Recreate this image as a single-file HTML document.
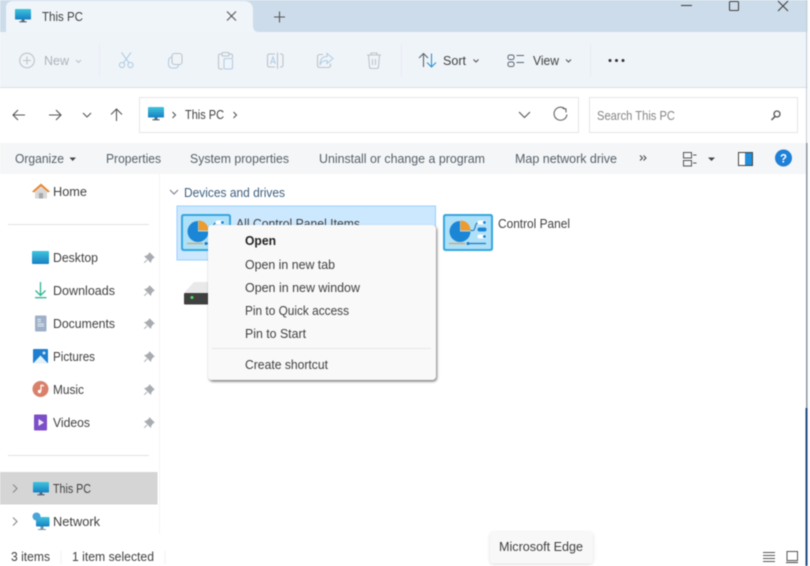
<!DOCTYPE html>
<html><head><meta charset="utf-8"><title>This PC</title>
<style>
html,body{margin:0;padding:0;background:#fff;width:810px;height:566px;overflow:hidden}
svg{display:block;filter:blur(.45px)}
text{font-family:"Liberation Sans",sans-serif;font-size:13px;fill:#404040}
.d{fill:#adb3b9}
.i{fill:none;stroke:#bcc3ca;stroke-width:1.1}
.b{fill:none;stroke:#b3cde2;stroke-width:1.1}
.k{fill:none;stroke:#555;stroke-width:1.1}
</style></head><body>
<svg width="810" height="566" viewBox="0 0 810 566" xmlns="http://www.w3.org/2000/svg">
<defs>
<filter id="sh" x="-10%" y="-10%" width="120%" height="125%"><feDropShadow dx="1" dy="1.5" stdDeviation="1.3" flood-color="#000" flood-opacity=".55"/></filter>
<filter id="sh2" x="-10%" y="-20%" width="120%" height="140%"><feDropShadow dx="0" dy="1" stdDeviation="1.5" flood-color="#000" flood-opacity=".14"/></filter>
<linearGradient id="mon" x1="0" y1="0" x2="0" y2="1"><stop offset="0" stop-color="#3fc5dc"/><stop offset="1" stop-color="#1680c4"/></linearGradient>
<symbol id="pc" viewBox="0 0 16 14"><rect x="0" y="0" width="16" height="10.5" rx=".8" fill="url(#mon)"/><rect x="6.6" y="10.5" width="2.8" height="2" fill="#4a6a80"/><rect x="4.4" y="12.2" width="7.2" height="1.1" fill="#4a5a68"/></symbol>
<symbol id="pin" viewBox="0 0 12 12"><path d="M6.6 1 L11 5.4 L9.8 5.9 L7.9 8.6 L7.6 10 L2 4.4 L3.4 4.1 L6.1 2.2Z M4 8 L1.2 10.8" fill="#a8acb0" stroke="#a8acb0" stroke-width="1"/></symbol>
<symbol id="cp" viewBox="0 0 50 37"><rect width="50" height="37" rx="2.500" fill="#35a6e0"/><rect x="2" y="2" width="46" height="33" rx="1" fill="#aee0f7"/><path d="M17 7 A10.500 10.500 0 1 0 27.500 17.500 L17 17.500Z" fill="#1c86d6"/><path d="M17.500 6.500 A10 10 0 0 1 27.500 16.500 L17.500 16.500Z" fill="#ee9a2e"/><path d="M27.500 16.500 H30 C33 16.500 31 8.500 36 8.500" fill="none" stroke="#1f6fb8" stroke-width="1"/><rect x="34.500" y="6.500" width="9" height="4" rx="2" fill="#fff"/><circle cx="41.500" cy="8.500" r="1.500" fill="#1c86d6"/><rect x="34.500" y="13.500" width="9" height="4" rx="2" fill="#1c86d6"/><rect x="34.500" y="20.500" width="9" height="4" rx="2" fill="#fff"/><circle cx="41.500" cy="22.500" r="1.500" fill="#1c86d6"/><path d="M6 29.500H22" stroke="#d8a256" stroke-width="1.200"/><path d="M26 29.500H43" stroke="#1c78c4" stroke-width="1.200"/><circle cx="25" cy="29.500" r="1.500" fill="#1c78c4"/></symbol>
</defs>

<!-- window chrome -->
<rect width="810" height="32" fill="#cddcea"/>
<rect y="32" width="810" height="55" fill="#eff4f9"/>
<rect y="87" width="810" height="1" fill="#d8dfe5"/>
<rect y="143" width="810" height="31" fill="#f5f6f7"/>
<path d="M0 32 H6 V8 Q6 1 14 1 H243 Q253 1 253 10 V26 Q253 32 259 32 H0Z" fill="#f0f5fa"/>
<rect x="159" y="174" width="1" height="360" fill="#f6f6f6"/>

<!-- right edge -->
<rect x="806" y="0" width="1" height="143" fill="#c2ccd6"/>
<rect x="806" y="143" width="1.500" height="265" fill="#8e96a0"/>
<rect x="805.500" y="408" width="2.500" height="158" fill="#1d4a80"/>
<rect x="807.500" y="0" width="2.500" height="566" fill="#fbfbfb"/>

<!-- tab -->
<use href="#pc" x="15" y="9" width="16" height="14"/>
<text x="42" y="21" textLength="41" lengthAdjust="spacingAndGlyphs" fill="#333">This PC</text>
<path d="M227 11.500 L236 20.500 M236 11.500 L227 20.500" class="k"/>
<path d="M279.500 11.500 V22.500 M274 17 H285" class="k" stroke="#666"/>

<!-- caption buttons -->
<path d="M681 5.500 H692" stroke="#444" stroke-width="1.100"/>
<rect x="729.500" y="1.500" width="9" height="9" rx="1" fill="none" stroke="#444" stroke-width="1.100"/>
<path d="M778 1 L788 11 M788 1 L778 11" stroke="#444" stroke-width="1.100" fill="none"/>

<!-- toolbar -->
<circle cx="27" cy="60.500" r="7.300" class="i"/>
<path d="M27 56.500 V64.500 M23 60.500 H31" class="i"/>
<text class="d" x="44" y="65" textLength="25" lengthAdjust="spacingAndGlyphs">New</text>
<path d="M76 60 L78.500 62.500 L81 60" class="i"/>
<rect x="99" y="44" width="1" height="33" fill="#e8edf2"/>
<!-- cut -->
<circle cx="122" cy="65" r="2.600" class="b"/><circle cx="130.500" cy="65" r="2.600" class="b"/>
<path d="M123.500 62.800 L131 52.500 M129 62.800 L121.500 52.500" class="b" stroke="#b8bfc6"/>
<!-- copy -->
<rect x="172" y="53.500" width="10" height="11" rx="2.500" class="i"/>
<path d="M172 57 Q168.500 57.500 168.500 61 V64 Q168.500 68 172.500 68 H175 Q178 68 178.500 65" class="b"/>
<!-- paste -->
<path d="M222 54 H220 Q218.500 54 218.500 56 V67 Q218.500 69 220.500 69 H223" class="i"/>
<path d="M229 54 H231 Q232.500 54 232.500 56 V58" class="i"/>
<rect x="222" y="52.500" width="7" height="3.500" rx="1" class="i"/>
<rect x="224" y="58.500" width="8.500" height="10.500" rx="1.500" class="b"/>
<!-- rename -->
<path d="M275 54 H269.500 Q267.500 54 267.500 56 V65 Q267.500 67 269.500 67 H275" class="i"/>
<path d="M280 54 H281 Q283 54 283 56 V65 Q283 67 281 67 H280" class="i"/>
<path d="M277.500 52.500 V69" class="i"/>
<path d="M270.500 64 L273 57 L275.500 64 M271.500 62 H274.500" class="b"/>
<!-- share -->
<path d="M327 53.500 L333 58.500 L327 63.500 V60.500 Q321.500 60.500 320 65 Q320 56.500 327 56.500Z" class="b"/>
<path d="M323 54.500 H320 Q317.500 54.500 317.500 57 V65 Q317.500 67.500 320 67.500 H328 Q330.500 67.500 330.500 65 V63.500" class="i"/>
<!-- delete -->
<path d="M367 55 H381 M371 55 V53 H377 V55 M368.500 55 L369.500 67 Q369.700 68.500 371.500 68.500 H376.500 Q378.300 68.500 378.500 67 L379.500 55 M372.500 59 V65 M375.500 59 V65" class="i"/>
<rect x="401" y="44" width="1" height="33" fill="#e8edf2"/>
<!-- sort -->
<path d="M423.500 67 V53.500 M419 58 L423.500 53.500 L428 58" fill="none" stroke="#5a6570" stroke-width="1.100"/>
<path d="M431.500 53.500 V67 M427 62.500 L431.500 67 L436 62.500" fill="none" stroke="#2f8fd0" stroke-width="1.100"/>
<text x="443" y="65" textLength="23" lengthAdjust="spacingAndGlyphs">Sort</text>
<path d="M473.500 59.500 L476 62 L478.500 59.500" class="k" stroke="#888"/>
<!-- view -->
<rect x="508" y="55" width="6" height="4.500" rx="1.800" fill="none" stroke="#5a6570" stroke-width="1"/>
<rect x="508" y="62" width="6" height="4.500" rx="1.800" fill="none" stroke="#5a6570" stroke-width="1"/>
<path d="M516.500 55.500 H524 M516.500 62.500 H524" stroke="#5a6570" stroke-width="1"/>
<text x="533" y="65" textLength="26" lengthAdjust="spacingAndGlyphs">View</text>
<path d="M566 59.500 L568.500 62 L571 59.500" class="k" stroke="#888"/>
<rect x="590" y="44" width="1" height="33" fill="#e8edf2"/>
<circle cx="610" cy="60.500" r="1.500" fill="#333"/><circle cx="616.500" cy="60.500" r="1.500" fill="#333"/><circle cx="623" cy="60.500" r="1.500" fill="#333"/>

<!-- nav -->
<path d="M13 115 H25 M18 110 L13 115 L18 120" class="k"/>
<path d="M49 115 H61 M56 110 L61 115 L56 120" class="k"/>
<path d="M83 113 L87 117 L91 113" class="k"/>
<path d="M116.500 121 V109 M111 114.500 L116.500 109 L122 114.500" class="k"/>
<rect x="139.500" y="97.500" width="439" height="35" fill="#fff" stroke="#e4e6e8"/>
<use href="#pc" x="148" y="107" width="16" height="14"/>
<path d="M172.500 112 L175.500 115 L172.500 118" class="k"/>
<text x="185" y="119" textLength="39" lengthAdjust="spacingAndGlyphs">This PC</text>
<path d="M233.500 112 L236.500 115 L233.500 118" class="k"/>
<path d="M519 112 L524.500 117.500 L530 112" class="k"/>
<path d="M565.500 109.500 A6.500 6.500 0 1 0 567 114.500 M562.500 108.500 L566 109 L566 112.500" fill="none" stroke="#666" stroke-width="1.100"/>
<rect x="589.500" y="97.500" width="208" height="35" fill="#fff" stroke="#e4e6e8"/>
<text x="597" y="120" textLength="78" lengthAdjust="spacingAndGlyphs" style="fill:#858585">Search This PC</text>
<circle cx="777" cy="114" r="3" fill="none" stroke="#555" stroke-width="1.300"/>
<path d="M775 116.500 L771.500 120" stroke="#555" stroke-width="1.500"/>

<!-- command bar -->
<text x="15" y="163" textLength="49" lengthAdjust="spacingAndGlyphs" style="fill:#55606a">Organize</text>
<path d="M69.500 157.500 H76 L72.700 161Z" fill="#444"/>
<text x="106" y="163" textLength="55" lengthAdjust="spacingAndGlyphs" style="fill:#55606a">Properties</text>
<text x="190" y="163" textLength="99" lengthAdjust="spacingAndGlyphs" style="fill:#55606a">System properties</text>
<text x="319" y="163" textLength="166" lengthAdjust="spacingAndGlyphs" style="fill:#55606a">Uninstall or change a program</text>
<text x="515" y="163" textLength="102" lengthAdjust="spacingAndGlyphs" style="fill:#55606a">Map network drive</text>
<path d="M640 155.500 L642.500 158 L640 160.500 M643.500 155.500 L646 158 L643.500 160.500" fill="none" stroke="#444" stroke-width="1"/>
<rect x="683.500" y="152.500" width="8" height="5.500" fill="none" stroke="#555"/>
<rect x="683.500" y="160.500" width="8" height="5.500" fill="none" stroke="#555"/>
<path d="M693 155 H696.500 M693 163 H696.500" stroke="#555"/>
<path d="M708 157.500 H715 L711.500 161Z" fill="#444"/>
<rect x="738.500" y="152.500" width="14" height="13" fill="#fff" stroke="#444"/>
<rect x="745" y="153" width="7" height="12" fill="#1f8fdc"/>
<circle cx="783.500" cy="158" r="8.500" fill="#1f80d8"/>
<text x="780" y="162.500" textLength="7" lengthAdjust="spacingAndGlyphs" style="fill:#fff;font-weight:bold;font-size:11.500px">?</text>

<!-- sidebar -->
<path d="M32 191.500 L41 183.500 L50 191.500 L48 192.500 L41 186.500 L34 192.500Z" fill="#e58b3a"/>
<path d="M35 192 L41 187 L47 192 V198.500 H35Z" fill="#d8d8d8"/>
<rect x="39" y="193" width="4" height="5.500" fill="#a8a8a8"/>
<text x="53" y="196" textLength="34" lengthAdjust="spacingAndGlyphs">Home</text>
<rect x="8" y="224" width="141" height="1" fill="#e2e2e2"/>
<rect x="32" y="251" width="17" height="13" rx="1" fill="url(#mon)"/>
<text x="53" y="262" textLength="45" lengthAdjust="spacingAndGlyphs">Desktop</text>
<use href="#pin" x="143" y="252" width="12" height="12"/>
<path d="M40.500 282 V295 M35.500 290.500 L40.500 295.500 L45.500 290.500" fill="none" stroke="#2fb392" stroke-width="1.300"/>
<rect x="35" y="297" width="11.500" height="1.300" fill="#2fb392"/>
<text x="53" y="295" textLength="62" lengthAdjust="spacingAndGlyphs">Downloads</text>
<use href="#pin" x="143" y="285" width="12" height="12"/>
<rect x="35" y="315.500" width="11.500" height="16" rx="1" fill="#9fb1c8"/>
<path d="M37.500 319.500 H41 M37.500 321.500 H41 M37.500 324 H44 M37.500 326 H44" stroke="#e8edf3" stroke-width="1"/>
<text x="53" y="328" textLength="62" lengthAdjust="spacingAndGlyphs">Documents</text>
<use href="#pin" x="143" y="318" width="12" height="12"/>
<rect x="33" y="349" width="15" height="14.500" rx="1" fill="#1e7fd0"/>
<path d="M33 363.500 L40.500 355.500 L48 363.500Z" fill="#e6f2fb"/>
<circle cx="44" cy="353" r="1.500" fill="#cfe6f7"/>
<text x="53" y="361" textLength="42" lengthAdjust="spacingAndGlyphs">Pictures</text>
<use href="#pin" x="143" y="351" width="12" height="12"/>
<circle cx="40.500" cy="389" r="8" fill="#d9806a"/>
<path d="M41 385 V391 M41 385 L44 386" stroke="#fff" stroke-width="1.200" fill="none"/>
<circle cx="39.500" cy="391.500" r="1.700" fill="#fff"/>
<text x="53" y="394" textLength="31" lengthAdjust="spacingAndGlyphs">Music</text>
<use href="#pin" x="143" y="384" width="12" height="12"/>
<rect x="34" y="414.500" width="13" height="16" rx="1" fill="#7c4fc8"/>
<path d="M38.500 419 L44 422.500 L38.500 426Z" fill="#f0e8fb"/>
<text x="53" y="427" textLength="37" lengthAdjust="spacingAndGlyphs">Videos</text>
<use href="#pin" x="143" y="417" width="12" height="12"/>
<rect x="8" y="455" width="141" height="1" fill="#e2e2e2"/>
<rect x="0" y="472" width="157.500" height="32.500" fill="#d5d5d5"/>
<path d="M13 484.500 L17 488.500 L13 492.500" fill="none" stroke="#888" stroke-width="1.100"/>
<use href="#pc" x="33" y="482" width="16" height="14"/>
<text x="53" y="493" textLength="38" lengthAdjust="spacingAndGlyphs">This PC</text>
<path d="M13 517.500 L17 521.500 L13 525.500" fill="none" stroke="#888" stroke-width="1.100"/>
<rect x="36" y="517" width="13.500" height="9.500" rx="1" fill="url(#mon)"/>
<rect x="40.500" y="526.500" width="3" height="2.500" fill="#7a92a4"/>
<rect x="38" y="529" width="8" height="1" fill="#7a92a4"/>
<circle cx="36.500" cy="516.500" r="4" fill="#4aa6d8"/>
<text x="53" y="526" textLength="47" lengthAdjust="spacingAndGlyphs">Network</text>

<!-- status -->
<text x="11" y="561" textLength="39" lengthAdjust="spacingAndGlyphs">3 items</text>
<rect x="60.500" y="551" width="1" height="13" fill="#f2f2f2"/>
<text x="72" y="561" textLength="82" lengthAdjust="spacingAndGlyphs">1 item selected</text>
<rect x="164.500" y="551" width="1" height="13" fill="#f2f2f2"/>
<path d="M763 552.500 H775 M763 555.500 H775 M763 558.500 H775 M763 561.500 H775" stroke="#555" stroke-width="1"/>
<rect x="787" y="551.500" width="10.500" height="9" fill="none" stroke="#555" stroke-width="1"/>
<path d="M786 562.500 H798" stroke="#555" stroke-width="1.200"/>

<!-- content -->
<path d="M170 190 L174 194 L178 190" fill="none" stroke="#778" stroke-width="1"/>
<text x="184" y="197" textLength="101" lengthAdjust="spacingAndGlyphs" style="fill:#3f6080">Devices and drives</text>
<rect x="177" y="206" width="258.500" height="54" fill="#cce8ff" stroke="#99d1ff"/>
<use href="#cp" x="181" y="214" width="50" height="37"/>
<text x="236" y="228" textLength="124" lengthAdjust="spacingAndGlyphs">All Control Panel Items</text>
<use href="#cp" x="443" y="214" width="50" height="37"/>
<text x="498" y="228" textLength="72" lengthAdjust="spacingAndGlyphs">Control Panel</text>
<!-- drive -->
<path d="M184 293 L194 282 H210 V293Z" fill="#e9e9e9"/>
<rect x="184" y="293" width="26" height="11.500" rx="1" fill="#404040"/>
<circle cx="192" cy="297.500" r="1.500" fill="#4fe060"/>

<!-- context menu -->
<rect x="208" y="225" width="228" height="155" rx="4" fill="#f9f9f9" filter="url(#sh)"/>
<text x="245" y="245" textLength="31" lengthAdjust="spacingAndGlyphs" style="font-weight:bold;fill:#222">Open</text>
<text x="245" y="269" textLength="90" lengthAdjust="spacingAndGlyphs">Open in new tab</text>
<text x="245" y="292" textLength="115" lengthAdjust="spacingAndGlyphs">Open in new window</text>
<text x="245" y="315" textLength="104" lengthAdjust="spacingAndGlyphs">Pin to Quick access</text>
<text x="245" y="338" textLength="61" lengthAdjust="spacingAndGlyphs">Pin to Start</text>
<rect x="212" y="348" width="219" height="1" fill="#e6e6e6"/>
<text x="245" y="369" textLength="83" lengthAdjust="spacingAndGlyphs">Create shortcut</text>

<!-- tooltip -->
<rect x="490" y="531.500" width="103" height="32" rx="4" fill="#f8f8f8" filter="url(#sh2)"/>
<text x="499" y="551" textLength="84" lengthAdjust="spacingAndGlyphs">Microsoft Edge</text>
</svg>
</body></html>
